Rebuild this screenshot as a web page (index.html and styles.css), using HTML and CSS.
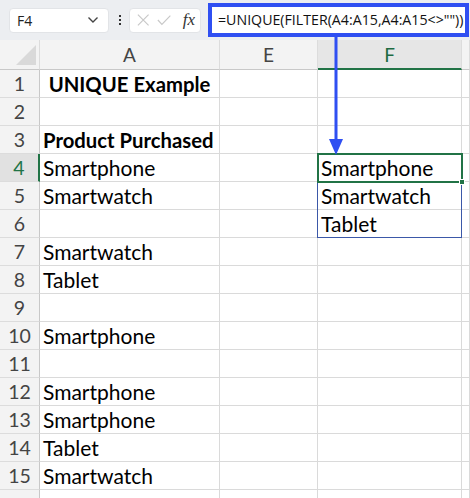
FILE: index.html
```html
<!DOCTYPE html>
<html lang="en">

<head>
  <meta charset="UTF-8" />
  <title>UNIQUE Example</title>
  <link rel="stylesheet" href="styles.css">
</head>

<body>
  <div class="app">
    <!-- 公式栏 -->
    <div class="toolbar">
      <div class="namebox">
        <span>F4</span>
        <svg class="chev" width="12" height="8" viewBox="0 0 12 8">
          <path d="M1.5 1.5 L6 6 L10.5 1.5" fill="none" stroke="#444" stroke-width="1.4" />
        </svg>
      </div>
      <div class="dots"><i></i><i></i><i></i></div>
      <div class="fxbox">
        <svg width="14" height="14" viewBox="0 0 14 14">
          <path d="M1 1 L13 13 M13 1 L1 13" stroke="#c8c8c8" stroke-width="1.3" fill="none" />
        </svg>
        <svg width="16" height="12" viewBox="0 0 16 12">
          <path d="M1 6 L5.5 11 L15 1" stroke="#c8c8c8" stroke-width="1.3" fill="none" />
        </svg>
        <span class="fx">fx</span>
      </div>
      <div class="formula">=UNIQUE(FILTER(A4:A15,A4:A15&lt;&gt;""))</div>
    </div>

    <!-- 表格区域 -->
    <div class="sheet">
      <div class="grid">
        <div class="hd corner"><span class="tri"></span></div>
        <div class="hd">A</div>
        <div class="hd">E</div>
        <div class="hd hd-on">F</div>
        <div class="hd"></div>

        <div class="rn">1</div><div class="c c-center b">UNIQUE Example</div><div class="c"></div><div class="c"></div><div class="c"></div>
        <div class="rn">2</div><div class="c"></div><div class="c"></div><div class="c"></div><div class="c"></div>
        <div class="rn">3</div><div class="c b">Product Purchased</div><div class="c"></div><div class="c"></div><div class="c"></div>
        <div class="rn rn-on">4</div><div class="c">Smartphone</div><div class="c"></div><div class="c">Smartphone</div><div class="c"></div>
        <div class="rn">5</div><div class="c">Smartwatch</div><div class="c"></div><div class="c">Smartwatch</div><div class="c"></div>
        <div class="rn">6</div><div class="c"></div><div class="c"></div><div class="c">Tablet</div><div class="c"></div>
        <div class="rn">7</div><div class="c">Smartwatch</div><div class="c"></div><div class="c"></div><div class="c"></div>
        <div class="rn">8</div><div class="c">Tablet</div><div class="c"></div><div class="c"></div><div class="c"></div>
        <div class="rn">9</div><div class="c"></div><div class="c"></div><div class="c"></div><div class="c"></div>
        <div class="rn">10</div><div class="c">Smartphone</div><div class="c"></div><div class="c"></div><div class="c"></div>
        <div class="rn">11</div><div class="c"></div><div class="c"></div><div class="c"></div><div class="c"></div>
        <div class="rn">12</div><div class="c">Smartphone</div><div class="c"></div><div class="c"></div><div class="c"></div>
        <div class="rn">13</div><div class="c">Smartphone</div><div class="c"></div><div class="c"></div><div class="c"></div>
        <div class="rn">14</div><div class="c">Tablet</div><div class="c"></div><div class="c"></div><div class="c"></div>
        <div class="rn">15</div><div class="c">Smartwatch</div><div class="c"></div><div class="c"></div><div class="c"></div>
        <div class="rn"></div><div class="c"></div><div class="c"></div><div class="c"></div><div class="c"></div>
      </div>

      <!-- 溢出区域边框 -->
      <div class="spill"></div>
      <!-- 当前选中单元格 -->
      <div class="active"><span class="handle"></span></div>
    </div>

    <!-- 箭头 -->
    <svg class="arrow" width="16" height="120" viewBox="0 0 16 120">
      <rect x="6.5" y="0" width="3" height="104" fill="#2f4ff2" />
      <path d="M1 102 L15 102 L8 118 Z" fill="#2f4ff2" />
    </svg>
  </div>
</body>

</html>
```

FILE: styles.css
```css
* {
  margin: 0;
  padding: 0;
  box-sizing: border-box;
}

body {
  width: 470px;
  height: 498px;
  overflow: hidden;
  background: #fff;
  font-family: Lato, "Open Sans", sans-serif;
}

.app {
  position: relative;
  width: 470px;
  height: 498px;
  overflow: hidden;
}

/* 公式栏 */
.toolbar {
  display: flex;
  align-items: center;
  height: 40px;
  padding: 0 1px 0 9px;
  background: #eceef1;
}

.namebox {
  display: flex;
  align-items: center;
  justify-content: space-between;
  width: 100px;
  height: 25px;
  padding: 0 9px 0 7px;
  background: #fff;
  border: 1px solid #e2e4e7;
  border-radius: 4px;
  font-family: "Open Sans", sans-serif;
  font-size: 14px;
  color: #222;
}

.dots {
  display: flex;
  flex-direction: column;
  gap: 2px;
  margin: 0 8px 0 10px;
}

.dots i {
  width: 2px;
  height: 2px;
  background: #333;
}

.fxbox {
  display: flex;
  align-items: center;
  gap: 8px;
  width: 72px;
  height: 25px;
  padding: 0 5px 0 7px;
  background: #fff;
  border: 1px solid #e2e4e7;
  border-radius: 4px;
}

.fx {
  margin-left: 3px;
  font-family: "Liberation Serif", serif;
  font-style: italic;
  font-size: 17px;
  color: #333;
}

.formula {
  flex: 1;
  height: 34px;
  margin-left: 7px;
  padding: 0 0 0 6px;
  background: #fff;
  border: 4px solid #2f4ff2;
  font-family: "Open Sans", sans-serif;
  font-size: 14.2px;
  line-height: 26px;
  color: #111;
  white-space: nowrap;
  overflow: hidden;
}

/* 表格 */
.sheet {
  position: relative;
}

.grid {
  display: grid;
  grid-template-columns: 40px 180px 98px 144px 8px;
  grid-template-rows: 30px repeat(16, 28px);
}

.hd {
  display: flex;
  align-items: center;
  justify-content: center;
  background: #f3f3f3;
  border-right: 1px solid #dcdcdc;
  border-bottom: 1px solid #c8c8c8;
  font-size: 19px;
  color: #444;
}

.corner {
  align-items: flex-end;
  justify-content: flex-end;
  padding: 0 3px 4px 0;
}

.tri {
  width: 0;
  height: 0;
  border-left: 20px solid transparent;
  border-bottom: 20px solid #d9d9d9;
}

.hd-on {
  background: #e6e6e6;
  color: #1e6b41;
  border-bottom: 2px solid #217346;
}

.rn {
  display: flex;
  align-items: center;
  justify-content: center;
  background: #f3f3f3;
  border-right: 1px solid #c8c8c8;
  border-bottom: 1px solid #dcdcdc;
  font-size: 19.5px;
  color: #444;
}

.rn-on {
  background: #e1e1e1;
  color: #217346;
  border-right: 2px solid #217346;
}

.c {
  display: flex;
  align-items: center;
  padding-left: 3px;
  border-right: 1px solid #dadada;
  border-bottom: 1px solid #dadada;
  font-size: 21px;
  color: #000;
  white-space: nowrap;
}

.c-center {
  justify-content: center;
  padding-left: 0;
}

.b {
  font-weight: bold;
  font-size: 20.3px;
}

.spill {
  position: absolute;
  left: 317px;
  top: 113px;
  width: 145px;
  height: 85px;
  border: 1px solid #3b58a8;
}

.active {
  position: absolute;
  left: 317px;
  top: 113px;
  width: 146px;
  height: 30px;
  border: 2px solid #217346;
}

.handle {
  position: absolute;
  right: -4px;
  bottom: -4px;
  width: 6px;
  height: 6px;
  background: #217346;
  border: 1px solid #fff;
}

.arrow {
  position: absolute;
  left: 328px;
  top: 37px;
}
```
